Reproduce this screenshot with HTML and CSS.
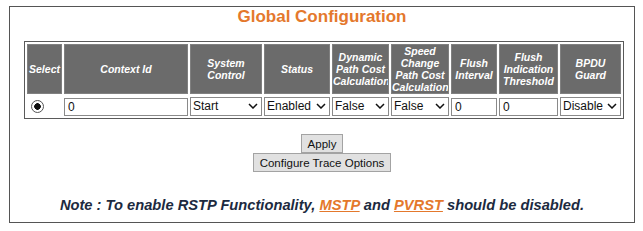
FILE: index.html
```html
<!DOCTYPE html>
<html lang="en">
<head>
    <meta charset="UTF-8">
    <title>Global Configuration</title>
    <link rel="stylesheet" href="styles.css">
</head>
<body>

    <div class="panel">
        <h2 class="title">Global Configuration</h2>

        <table class="config">
            <tr class="head">
                <th class="c-select">Select</th>
                <th class="c-context">Context Id</th>
                <th class="c-system">System Control</th>
                <th class="c-status">Status</th>
                <th class="c-dynamic">Dynamic Path Cost Calculation</th>
                <th class="c-speed">Speed Change Path Cost Calculation</th>
                <th class="c-flush">Flush Interval</th>
                <th class="c-thresh">Flush Indication Threshold</th>
                <th class="c-bpdu">BPDU Guard</th>
            </tr>
            <tr class="row">
                <td><input type="radio" class="pick" name="ctx" checked></td>
                <td><input type="text" class="field" value="0"></td>
                <td>
                    <select class="field">
                        <option>Start</option>
                        <option>Shutdown</option>
                    </select>
                </td>
                <td>
                    <select class="field">
                        <option>Enabled</option>
                        <option>Disabled</option>
                    </select>
                </td>
                <td>
                    <select class="field">
                        <option>False</option>
                        <option>True</option>
                    </select>
                </td>
                <td>
                    <select class="field">
                        <option>False</option>
                        <option>True</option>
                    </select>
                </td>
                <td><input type="text" class="field" value="0"></td>
                <td><input type="text" class="field" value="0"></td>
                <td>
                    <select class="field">
                        <option>Disable</option>
                        <option>Enable</option>
                    </select>
                </td>
            </tr>
        </table>

        <div class="actions">
            <button class="btn">Apply</button>
            <button class="btn">Configure Trace Options</button>
        </div>

        <p class="note">Note : To enable RSTP Functionality, <a href="#">MSTP</a> and <a href="#">PVRST</a> should be disabled.</p>
    </div>

</body>
</html>
```

FILE: styles.css
```css
body {
    margin: 0;
    font-family: "Liberation Sans", Arial, sans-serif;
    background: #fff;
}
.panel {
    box-sizing: border-box;
    width: 626px;
    height: 217px;
    margin: 6px 0 0 9px;
    border: 1px solid #555;
}
.title {
    margin: 0;
    font-size: 17px;
    line-height: 20px;
    font-weight: bold;
    text-align: center;
    color: #e4782c;
}

/* Table */
.config {
    width: 600px;
    margin: 14px 0 0 14px;
    table-layout: fixed;
    border: 1px solid #5a5a5a;
    border-spacing: 2px;
}
.config th {
    box-sizing: border-box;
    height: 49px;
    padding: 0;
    border: 1px solid #808080;
    background: #6b6b6b;
    color: #fff;
    font-size: 10.5px;
    line-height: 12px;
    font-style: italic;
    font-weight: bold;
    text-align: center;
    overflow: hidden;
}
.c-select { width: 35px; }
.c-context { width: 124px; }
.c-system { width: 72px; }
.c-status { width: 66px; }
.c-dynamic { width: 57px; }
.c-speed { width: 58px; }
.c-flush { width: 46px; }
.c-thresh { width: 59px; }
.c-bpdu { width: 61px; }

.config td {
    height: 20px;
    padding: 0;
    vertical-align: middle;
}
.pick {
    appearance: none;
    box-sizing: border-box;
    display: block;
    width: 13px;
    height: 13px;
    margin: 1px 0 0 4px;
    border: 1px solid #555;
    border-radius: 50%;
    background: radial-gradient(circle, #111 0 3px, #fff 3.6px);
}
.field {
    box-sizing: border-box;
    width: 100%;
    height: 18px;
    margin: 0;
    padding: 0 3px;
    border: 1px solid #8a8a8a;
    border-radius: 0;
    background: #fff;
    font-family: "Liberation Sans", Arial, sans-serif;
    font-size: 12px;
    color: #111;
}
select.field {
    appearance: none;
    height: 19px;
    padding: 0 14px 0 2px;
    background: #fff url("data:image/svg+xml,%3Csvg xmlns='http://www.w3.org/2000/svg' width='10' height='6'%3E%3Cpath d='M1 1l4 4 4-4' fill='none' stroke='%23111' stroke-width='1.5'/%3E%3C/svg%3E") no-repeat right 3px center;
}

/* Buttons */
.actions {
    display: flex;
    flex-direction: column;
    align-items: center;
    margin-top: 15px;
}
.btn {
    height: 19px;
    padding: 0 6px;
    border: 1px solid #a3a3a3;
    border-radius: 0;
    background: #e1e1e1;
    font-family: "Liberation Sans", Arial, sans-serif;
    font-size: 11.5px;
    color: #111;
}

/* Note */
.note {
    margin: 24px 0 0;
    text-align: center;
    font-size: 14.7px;
    line-height: 18px;
    font-weight: bold;
    font-style: italic;
    color: #1c2a40;
}
.note a {
    color: #e4782c;
    text-decoration: underline;
}
```
